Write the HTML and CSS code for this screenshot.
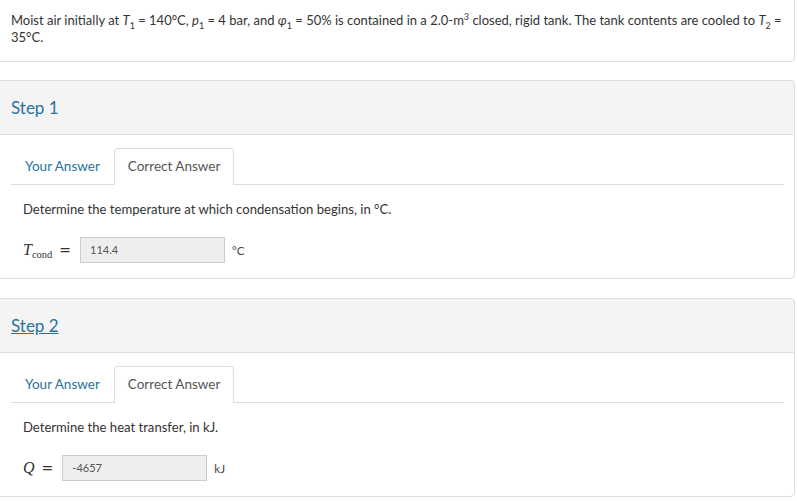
FILE: index.html
```html
<!DOCTYPE html>
<html lang="en">
<head>
  <meta charset="UTF-8">
  <title>Moist air - Steps</title>
  <link rel="stylesheet" href="styles.css">
</head>
<body>
  <div class="card intro">
    <p>Moist air initially at <i>T</i><sub>1</sub> = 140°C, <i>p</i><sub>1</sub> = 4 bar, and <i>φ</i><sub>1</sub> = 50% is contained in a 2.0-m<sup>3</sup> closed, rigid tank. The tank contents are cooled to <span class="nowrap"><i>T</i><sub>2</sub> =</span> 35°C.</p>
  </div>

  <div class="card step">
    <div class="step-head"><span class="step-title">Step 1</span></div>
    <div class="step-body">
      <div class="tabs">
        <span class="tab">Your Answer</span>
        <span class="tab active">Correct Answer</span>
      </div>
      <div class="question">
        <p>Determine the temperature at which condensation begins, in °C.</p>
        <div class="answer-row">
          <span class="math"><i>T</i><span class="sub">cond</span><span class="eq">=</span></span>
          <span class="answer">114.4</span>
          <span class="unit">°C</span>
        </div>
      </div>
    </div>
  </div>

  <div class="card step">
    <div class="step-head"><span class="step-title underline">Step 2</span></div>
    <div class="step-body">
      <div class="tabs">
        <span class="tab">Your Answer</span>
        <span class="tab active">Correct Answer</span>
      </div>
      <div class="question">
        <p>Determine the heat transfer, in kJ.</p>
        <div class="answer-row">
          <span class="math"><i>Q</i><span class="eq">=</span></span>
          <span class="answer">-4657</span>
          <span class="unit">kJ</span>
        </div>
      </div>
    </div>
  </div>
</body>
</html>
```

FILE: styles.css
```css
body {
  margin: 0;
  font-family: Lato, "Open Sans", sans-serif;
  color: #333;
  background: #fff;
  overflow: hidden;
}

.card {
  border: 1px solid #ddd;
  border-radius: 4px;
  margin: 0 2px 19px -4px;
  background: #fff;
}

.intro {
  margin-top: -10px;
  margin-bottom: 18px;
  padding: 21px 4px 15px 14px;
}

.intro p {
  margin: 0;
  font-size: 13px;
  line-height: 17px;
  color: #333;
}

.nowrap {
  white-space: nowrap;
}

sub, sup {
  font-size: 9px;
  line-height: 0;
}

.step-head {
  background: #f4f4f4;
  height: 53px;
  border-bottom: 1px solid #ddd;
  border-radius: 4px 4px 0 0;
  display: flex;
  align-items: center;
  padding-left: 14px;
}

.step-title {
  font-size: 17px;
  color: #2a72a0;
}

.step-title.underline {
  text-decoration: underline;
}

.step-body {
  padding: 13px 10px 15px 14px;
}

.tabs {
  display: flex;
  border-bottom: 1px solid #ddd;
}

.tab {
  font-size: 13.5px;
  color: #2a72a0;
  padding: 0 13px;
  height: 35px;
  line-height: 35px;
  border: 1px solid transparent;
  border-bottom: none;
  margin-bottom: -1px;
}

.tab.active {
  color: #555;
  border-color: #ddd;
  border-radius: 4px 4px 0 0;
  background: #fff;
  height: 36px;
  padding: 0 13px;
}

.question {
  padding-left: 12px;
}

.question p {
  margin: 15px 0 19px;
  font-size: 13.1px;
  line-height: 18px;
}

.answer-row {
  display: flex;
  align-items: center;
  height: 26px;
}

.math {
  font-family: "Liberation Serif", serif;
  font-size: 15px;
  display: flex;
  align-items: baseline;
}

.math i {
  font-size: 16px;
}

.math .sub {
  font-size: 10.5px;
  position: relative;
  top: 3px;
}

.eq {
  margin: 0 9px 0 7px;
  font-family: "DejaVu Serif", serif;
  font-size: 14px;
}

.answer {
  width: 134px;
  height: 24px;
  line-height: 24px;
  padding-left: 9px;
  background: #eee;
  border: 1px solid #ccc;
  font-size: 11px;
  color: #555;
}

.unit {
  font-size: 11.5px;
  margin-left: 7px;
  color: #444;
}
```
